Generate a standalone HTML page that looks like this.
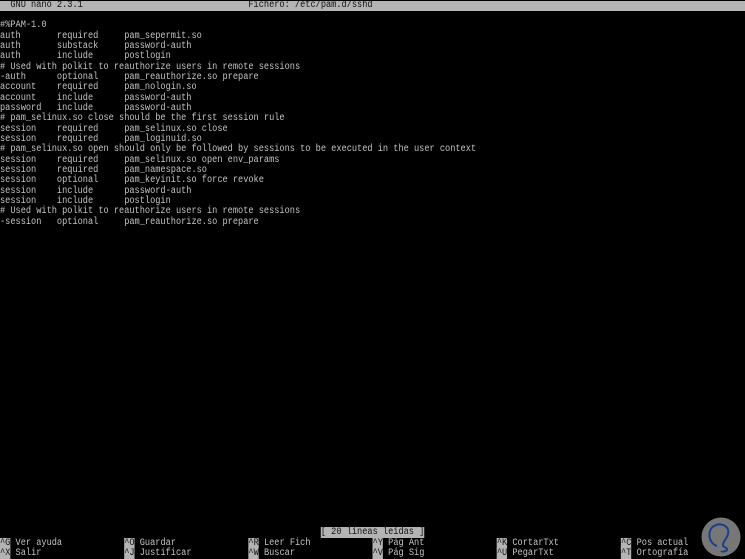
<!DOCTYPE html>
<html><head><meta charset="utf-8"><style>
html,body{margin:0;padding:0;background:#000;width:745px;height:559px;overflow:hidden}
#t{position:absolute;left:0;top:0;width:864px;transform:scaleX(0.8623);transform-origin:0 0;
font-family:"Liberation Mono",monospace;font-size:10px;line-height:10.35px;color:#c4c4c4;white-space:pre}
.r{position:absolute;left:0;height:10.35px}
.hl{background:#b4b4b4;color:#111}
</style></head><body>
<div id="t">
<div class="r hl" style="top:0.5px;width:864px">  GNU nano 2.3.1                                Fichero: /etc/pam.d/sshd</div>
<div class="r" style="top:21.2px">#%PAM-1.0
auth       required     pam_sepermit.so
auth       substack     password-auth
auth       include      postlogin
# Used with polkit to reauthorize users in remote sessions
-auth      optional     pam_reauthorize.so prepare
account    required     pam_nologin.so
account    include      password-auth
password   include      password-auth
# pam_selinux.so close should be the first session rule
session    required     pam_selinux.so close
session    required     pam_loginuid.so
# pam_selinux.so open should only be followed by sessions to be executed in the user context
session    required     pam_selinux.so open env_params
session    required     pam_namespace.so
session    optional     pam_keyinit.so force revoke
session    include      password-auth
session    include      postlogin
# Used with polkit to reauthorize users in remote sessions
-session   optional     pam_reauthorize.so prepare</div>
<div class="r" style="top:528.4px">                                                              <span class="hl">[ 20 líneas leídas ]</span></div>
<div class="r" style="top:538.7px"><span class="hl">^G</span> Ver ayuda            <span class="hl">^O</span> Guardar              <span class="hl">^R</span> Leer Fich            <span class="hl">^Y</span> Pág Ant              <span class="hl">^K</span> CortarTxt            <span class="hl">^C</span> Pos actual</div>
<div class="r" style="top:549px"><span class="hl">^X</span> Salir                <span class="hl">^J</span> Justificar           <span class="hl">^W</span> Buscar               <span class="hl">^V</span> Pág Sig              <span class="hl">^U</span> PegarTxt             <span class="hl">^T</span> Ortografía</div>
</div>
<svg style="position:absolute;left:700px;top:516px" width="44" height="43" viewBox="0 0 44 43">
<circle cx="21" cy="21" r="19.5" fill="#777"/>
<path d="M17 30 C8 27 7 14 14 10 C21 6 30 10 28 18 C27 23 23 25 23 29 C23 32 28 31 27 34 C26 36 22 35 21 36" fill="none" stroke="#1d3f8f" stroke-width="2"/>
</svg>
</body></html>
